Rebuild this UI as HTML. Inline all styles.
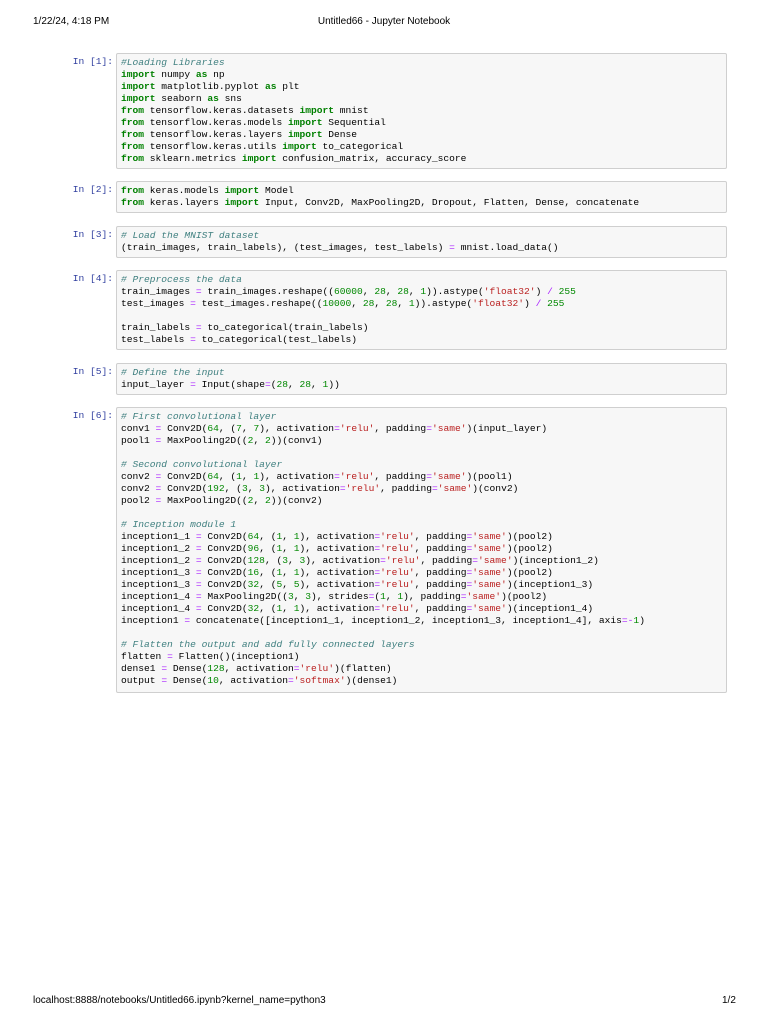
<!DOCTYPE html>
<html><head><meta charset="utf-8"><style>
body{margin:0;width:768px;height:1024px;background:#fff;position:relative;font-family:"Liberation Sans",sans-serif;}
.hd{position:absolute;font-size:10px;color:#000;}
.p{position:absolute;left:40px;width:73px;text-align:right;font-family:"Liberation Mono",monospace;font-size:9.6px;line-height:12px;color:#303F9F;}
.c{position:absolute;left:116px;width:611px;border:1px solid #cfcfcf;background:#f7f7f7;border-radius:2px;padding:3px 0 5px 4px;box-sizing:border-box;}
pre{margin:0;font-family:"Liberation Mono",monospace;font-size:9.6px;line-height:12px;color:#000;}
.k{color:#008000;font-weight:bold}.m{color:#408080;font-style:italic}.s{color:#BA2121}.n{color:#080}.o{color:#AA22FF}
</style></head><body>
<div class="hd" style="left:33px;top:16px">1/22/24, 4:18 PM</div>
<div class="hd" style="left:0;width:768px;text-align:center;top:16px">Untitled66 - Jupyter Notebook</div>
<div class="hd" style="left:33px;top:995px">localhost:8888/notebooks/Untitled66.ipynb?kernel_name=python3</div>
<div class="hd" style="left:722px;top:995px">1/2</div>

<div class="p" style="top:56px">In [1]:</div>
<div class="c" style="top:53px;height:116px"><pre><span class="m">#Loading Libraries</span>
<span class="k">import</span> numpy <span class="k">as</span> np
<span class="k">import</span> matplotlib.pyplot <span class="k">as</span> plt
<span class="k">import</span> seaborn <span class="k">as</span> sns
<span class="k">from</span> tensorflow.keras.datasets <span class="k">import</span> mnist
<span class="k">from</span> tensorflow.keras.models <span class="k">import</span> Sequential
<span class="k">from</span> tensorflow.keras.layers <span class="k">import</span> Dense
<span class="k">from</span> tensorflow.keras.utils <span class="k">import</span> to_categorical
<span class="k">from</span> sklearn.metrics <span class="k">import</span> confusion_matrix, accuracy_score</pre></div>

<div class="p" style="top:184px">In [2]:</div>
<div class="c" style="top:181px;height:32px"><pre><span class="k">from</span> keras.models <span class="k">import</span> Model
<span class="k">from</span> keras.layers <span class="k">import</span> Input, Conv2D, MaxPooling2D, Dropout, Flatten, Dense, concatenate</pre></div>

<div class="p" style="top:229px">In [3]:</div>
<div class="c" style="top:226px;height:32px"><pre><span class="m"># Load the MNIST dataset</span>
(train_images, train_labels), (test_images, test_labels) <span class="o">=</span> mnist.load_data()</pre></div>

<div class="p" style="top:273px">In [4]:</div>
<div class="c" style="top:270px;height:80px"><pre><span class="m"># Preprocess the data</span>
train_images <span class="o">=</span> train_images.reshape((<span class="n">60000</span>, <span class="n">28</span>, <span class="n">28</span>, <span class="n">1</span>)).astype(<span class="s">'float32'</span>) <span class="o">/</span> <span class="n">255</span>
test_images <span class="o">=</span> test_images.reshape((<span class="n">10000</span>, <span class="n">28</span>, <span class="n">28</span>, <span class="n">1</span>)).astype(<span class="s">'float32'</span>) <span class="o">/</span> <span class="n">255</span>

train_labels <span class="o">=</span> to_categorical(train_labels)
test_labels <span class="o">=</span> to_categorical(test_labels)</pre></div>

<div class="p" style="top:366px">In [5]:</div>
<div class="c" style="top:363px;height:32px"><pre><span class="m"># Define the input</span>
input_layer <span class="o">=</span> Input(shape<span class="o">=</span>(<span class="n">28</span>, <span class="n">28</span>, <span class="n">1</span>))</pre></div>

<div class="p" style="top:410px">In [6]:</div>
<div class="c" style="top:407px;height:286px"><pre><span class="m"># First convolutional layer</span>
conv1 <span class="o">=</span> Conv2D(<span class="n">64</span>, (<span class="n">7</span>, <span class="n">7</span>), activation<span class="o">=</span><span class="s">'relu'</span>, padding<span class="o">=</span><span class="s">'same'</span>)(input_layer)
pool1 <span class="o">=</span> MaxPooling2D((<span class="n">2</span>, <span class="n">2</span>))(conv1)

<span class="m"># Second convolutional layer</span>
conv2 <span class="o">=</span> Conv2D(<span class="n">64</span>, (<span class="n">1</span>, <span class="n">1</span>), activation<span class="o">=</span><span class="s">'relu'</span>, padding<span class="o">=</span><span class="s">'same'</span>)(pool1)
conv2 <span class="o">=</span> Conv2D(<span class="n">192</span>, (<span class="n">3</span>, <span class="n">3</span>), activation<span class="o">=</span><span class="s">'relu'</span>, padding<span class="o">=</span><span class="s">'same'</span>)(conv2)
pool2 <span class="o">=</span> MaxPooling2D((<span class="n">2</span>, <span class="n">2</span>))(conv2)

<span class="m"># Inception module 1</span>
inception1_1 <span class="o">=</span> Conv2D(<span class="n">64</span>, (<span class="n">1</span>, <span class="n">1</span>), activation<span class="o">=</span><span class="s">'relu'</span>, padding<span class="o">=</span><span class="s">'same'</span>)(pool2)
inception1_2 <span class="o">=</span> Conv2D(<span class="n">96</span>, (<span class="n">1</span>, <span class="n">1</span>), activation<span class="o">=</span><span class="s">'relu'</span>, padding<span class="o">=</span><span class="s">'same'</span>)(pool2)
inception1_2 <span class="o">=</span> Conv2D(<span class="n">128</span>, (<span class="n">3</span>, <span class="n">3</span>), activation<span class="o">=</span><span class="s">'relu'</span>, padding<span class="o">=</span><span class="s">'same'</span>)(inception1_2)
inception1_3 <span class="o">=</span> Conv2D(<span class="n">16</span>, (<span class="n">1</span>, <span class="n">1</span>), activation<span class="o">=</span><span class="s">'relu'</span>, padding<span class="o">=</span><span class="s">'same'</span>)(pool2)
inception1_3 <span class="o">=</span> Conv2D(<span class="n">32</span>, (<span class="n">5</span>, <span class="n">5</span>), activation<span class="o">=</span><span class="s">'relu'</span>, padding<span class="o">=</span><span class="s">'same'</span>)(inception1_3)
inception1_4 <span class="o">=</span> MaxPooling2D((<span class="n">3</span>, <span class="n">3</span>), strides<span class="o">=</span>(<span class="n">1</span>, <span class="n">1</span>), padding<span class="o">=</span><span class="s">'same'</span>)(pool2)
inception1_4 <span class="o">=</span> Conv2D(<span class="n">32</span>, (<span class="n">1</span>, <span class="n">1</span>), activation<span class="o">=</span><span class="s">'relu'</span>, padding<span class="o">=</span><span class="s">'same'</span>)(inception1_4)
inception1 <span class="o">=</span> concatenate([inception1_1, inception1_2, inception1_3, inception1_4], axis<span class="o">=-</span><span class="n">1</span>)

<span class="m"># Flatten the output and add fully connected layers</span>
flatten <span class="o">=</span> Flatten()(inception1)
dense1 <span class="o">=</span> Dense(<span class="n">128</span>, activation<span class="o">=</span><span class="s">'relu'</span>)(flatten)
output <span class="o">=</span> Dense(<span class="n">10</span>, activation<span class="o">=</span><span class="s">'softmax'</span>)(dense1)</pre></div>
</body></html>
